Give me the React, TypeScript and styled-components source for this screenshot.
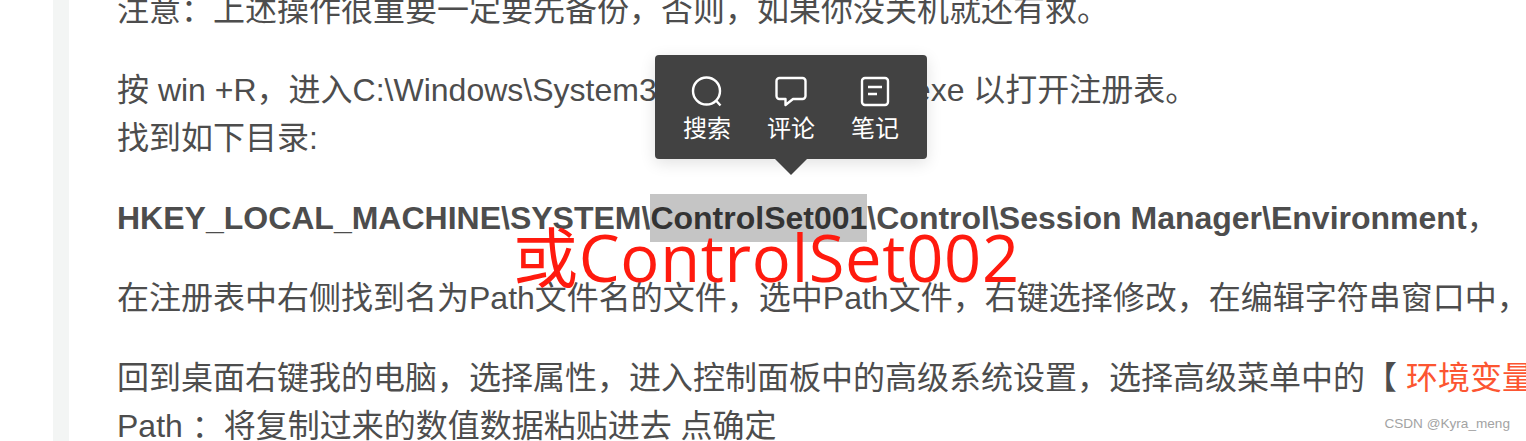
import styled, { createGlobalStyle } from "styled-components";

const GlobalStyle = createGlobalStyle`
  html, body {
    margin: 0;
    padding: 0;
    height: 100%;
    background: #fff;
    overflow: hidden;
  }
`;

const Page = styled.div`
  position: relative;
  display: flex;
  width: 1526px;
  height: 441px;
  padding-left: 53px;
  box-sizing: border-box;
  overflow: hidden;
  background: #fff;
`;

const Stripe = styled.div`
  flex: 0 0 16px;
  background: #f3f5f4;
`;

const Article = styled.article`
  flex: 1;
  min-width: 0;
  margin-top: -14px;
  padding-left: 48px;
  font-family: "Liberation Sans", "Noto Sans CJK SC", sans-serif;
  font-size: 32px;
  line-height: 48px;
  color: #4d4d4d;
  white-space: nowrap;
`;

const Para = styled.p`
  margin: 0 0 32px;
`;

const Selected = styled.span`
  display: inline-block;
  background: #c5c5c5;
  color: #333;
`;

const Accent = styled.span`
  color: #fc5531;
`;

const Toolbar = styled.div`
  position: absolute;
  left: 655px;
  top: 55px;
  display: flex;
  justify-content: center;
  gap: 36px;
  width: 272px;
  height: 104px;
  padding-top: 21px;
  box-sizing: border-box;
  border-radius: 4px;
  background: #424242;
  box-shadow: 0 4px 16px rgba(0, 0, 0, 0.12);

  &::after {
    content: "";
    position: absolute;
    left: 120px;
    bottom: -16px;
    border: 16px solid transparent;
    border-bottom-width: 0;
    border-top-color: #424242;
  }
`;

const ToolItem = styled.div`
  display: flex;
  flex-direction: column;
  align-items: center;
  width: 48px;
  font-family: "Liberation Sans", "Noto Sans CJK SC", sans-serif;
  font-size: 24px;
  line-height: 32px;
  color: #fff;

  svg {
    display: block;
    width: 32px;
    height: 32px;
    margin-bottom: 5px;
  }
`;

const Annotation = styled.div`
  position: absolute;
  left: 513px;
  top: 218px;
  font-family: "Open Sans", "Noto Sans CJK SC", sans-serif;
  font-size: 65px;
  line-height: 78px;
  letter-spacing: 0.7px;
  color: #ff1a0e;
  white-space: nowrap;
`;

const Watermark = styled.div`
  position: absolute;
  right: 16px;
  top: 415px;
  font-family: "Liberation Sans", sans-serif;
  font-size: 13.6px;
  line-height: 18px;
  color: #a3a3a3;
`;

const SearchIcon = () => (
  <svg viewBox="0 0 32 32" fill="none" stroke="#fff" strokeWidth="2.4">
    <circle cx="15.5" cy="15" r="13.5" />
    <path d="M25 24.5l4.5 5" />
  </svg>
);

const CommentIcon = () => (
  <svg viewBox="0 0 32 32" fill="none" stroke="#fff" strokeWidth="2.4" strokeLinejoin="round">
    <path d="M4.5 2h23a3 3 0 0 1 3 3v15a3 3 0 0 1-3 3H18l-7.5 6v-6h-6a3 3 0 0 1-3-3V5a3 3 0 0 1 3-3z" />
  </svg>
);

const NoteIcon = () => (
  <svg viewBox="0 0 32 32" fill="none" stroke="#fff" strokeWidth="2.4">
    <rect x="3" y="2" width="26" height="27" rx="3" />
    <path d="M9 11h14M9 18h9" />
  </svg>
);

// full-width punctuation, written as escapes so it can't get normalised
const COMMA = "\uFF0C";
const COLON = "\uFF1A";

export default function App() {
  return (
    <>
      <GlobalStyle />
      <Page>
        <Stripe />
        <Article>
          <Para>
            {`注意${COLON}上述操作很重要一定要先备份${COMMA}否则${COMMA}如果你没关机就还有救。`}
          </Para>
          <Para>
            {`按 win +R${COMMA}进入C:\\Windows\\System32\\config\\regedt32.exe 以打开注册表。`}
            <br />
            找到如下目录:
          </Para>
          <Para>
            <strong>
              HKEY_LOCAL_MACHINE\SYSTEM\<Selected>ControlSet001</Selected>\Control\Session Manager\Environment
            </strong>
            {COMMA}
          </Para>
          <Para>
            {`在注册表中右侧找到名为Path文件名的文件${COMMA}选中Path文件${COMMA}右键选择修改${COMMA}在编辑字符串窗口中${COMMA}`}
          </Para>
          <Para>
            {`回到桌面右键我的电脑${COMMA}选择属性${COMMA}进入控制面板中的高级系统设置${COMMA}选择高级菜单中的【 `}
            <Accent>环境变量</Accent>
            <br />
            {`Path ${COLON}将复制过来的数值数据粘贴进去 点确定`}
          </Para>
        </Article>
        <Toolbar>
          <ToolItem>
            <SearchIcon />
            搜索
          </ToolItem>
          <ToolItem>
            <CommentIcon />
            评论
          </ToolItem>
          <ToolItem>
            <NoteIcon />
            笔记
          </ToolItem>
        </Toolbar>
        <Annotation>或ControlSet002</Annotation>
        <Watermark>CSDN @Kyra_meng</Watermark>
      </Page>
    </>
  );
}
